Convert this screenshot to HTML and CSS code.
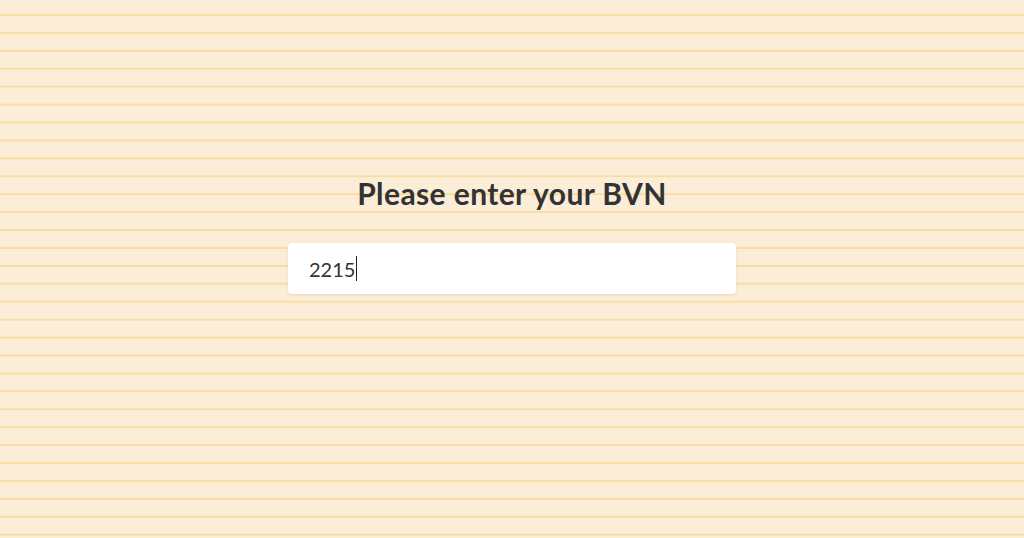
FILE: index.html
```html
<!DOCTYPE html>
<html lang="en">
<head>
<meta charset="utf-8">
<title>Enter BVN</title>
<link rel="stylesheet" href="styles.css">
</head>
<body>
<main class="page">
  <h1 class="title">Please enter your BVN</h1>
  <div class="field" role="textbox" aria-label="BVN">
    <span class="value">2215</span><span class="caret"></span>
  </div>
</main>
</body>
</html>
```

FILE: styles.css
```css
html, body {
  margin: 0;
  padding: 0;
}
body {
  width: 1024px;
  height: 538px;
  overflow: hidden;
  background-color: #fcedd8;
  background-image: linear-gradient(to bottom, transparent 14px, #f8dea5 14px, #f8dea5 15.6px, transparent 15.6px);
  background-size: 100% 17.93px;
  font-family: Lato, "Liberation Sans", sans-serif;
  color: #333333;
}
.page {
  display: flex;
  flex-direction: column;
  align-items: center;
  padding-top: 175px;
}
.title {
  margin: 0;
  font-size: 30px;
  font-weight: 700;
  letter-spacing: 0.4px;
  line-height: 36px;
  color: #333333;
}
.field {
  margin-top: 32px;
  width: 448px;
  height: 51px;
  box-sizing: border-box;
  padding: 0 21px;
  background: #ffffff;
  border-radius: 4px;
  box-shadow: 0 1px 3px rgba(150, 120, 70, 0.18);
  display: flex;
  align-items: center;
  font-size: 20px;
  line-height: 24px;
  color: #333333;
}
.caret {
  display: inline-block;
  width: 1px;
  height: 25px;
  margin-left: 1px;
  background: #222222;
}
```
